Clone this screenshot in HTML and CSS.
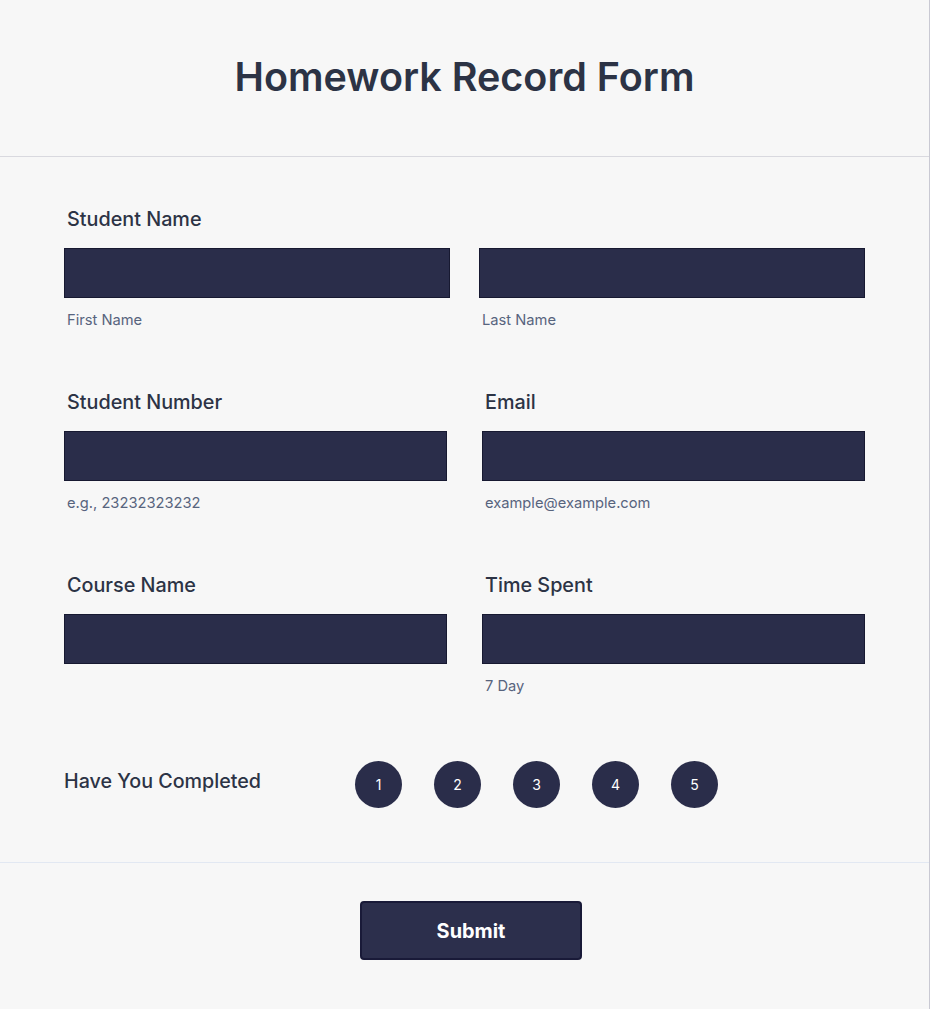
FILE: index.html
```html
<!DOCTYPE html>
<html>
<head>
<meta charset="utf-8">
<link rel="stylesheet" href="styles.css">
</head>
<body>
<div class="card">
  <header class="head">
    <h1 class="title">Homework Record Form</h1>
  </header>
  <form class="form">
    <div class="row row-a">
      <div class="field">
        <div class="label">Student Name</div>
        <div class="input"></div>
        <div class="sub">First Name</div>
      </div>
      <div class="field">
        <div class="label">&nbsp;</div>
        <div class="input"></div>
        <div class="sub">Last Name</div>
      </div>
    </div>
    <div class="row row-b">
      <div class="field">
        <div class="label">Student Number</div>
        <div class="input"></div>
        <div class="sub">e.g., 23232323232</div>
      </div>
      <div class="field">
        <div class="label">Email</div>
        <div class="input"></div>
        <div class="sub">example@example.com</div>
      </div>
    </div>
    <div class="row row-b">
      <div class="field">
        <div class="label">Course Name</div>
        <div class="input"></div>
      </div>
      <div class="field">
        <div class="label">Time Spent</div>
        <div class="input"></div>
        <div class="sub">7 Day</div>
      </div>
    </div>
    <div class="scale-row">
      <div class="scale-label">Have You Completed</div>
      <div class="scale">
        <span class="dot">1</span>
        <span class="dot">2</span>
        <span class="dot">3</span>
        <span class="dot">4</span>
        <span class="dot">5</span>
      </div>
    </div>
  </form>
  <div class="foot">
    <button class="submit" type="button">Submit</button>
  </div>
</div>
</body>
</html>
```
FILE: styles.css
```css
html, body {
  margin: 0;
  padding: 0;
  background: #f7f7f7;
}
body {
  font-family: Inter, "Noto Sans", sans-serif;
  color: #2c3345;
}
.card {
  width: 929px;
  height: 1009px;
  border-right: 1px solid #c9c9d3;
  background: #f7f7f7;
}
.head {
  height: 156px;
  border-bottom: 1px solid #d9d9df;
  display: flex;
  align-items: center;
  justify-content: center;
}
.title {
  margin: 0;
  font-size: 39.5px;
  font-weight: 600;
  color: #2c3345;
  padding-bottom: 2px;
}
.form {
  padding: 51px 64px 0 64px;
  height: 706px;
  box-sizing: border-box;
  border-bottom: 1px solid #e2e8f2;
}
.row {
  display: grid;
  grid-template-columns: 1fr 1fr;
  margin-bottom: 62px;
}
.row-a { column-gap: 29px; }
.row-b { column-gap: 35px; }
.row-b + .row-b { margin-bottom: 66px; }
.label {
  font-size: 19.8px;
  font-weight: 500;
  line-height: 22px;
  padding-left: 3px;
  margin-bottom: 18px;
}
.input {
  height: 48px;
  background: #2a2d4a;
  border: 1px solid #171931;
}
.sub {
  font-size: 14.7px;
  line-height: 18px;
  color: #57647e;
  margin-top: 13px;
  padding-left: 3px;
}
.scale-row {
  display: flex;
  align-items: center;
}
.scale-label {
  width: 291px;
  font-size: 19.7px;
  font-weight: 500;
  line-height: 24px;
  margin-top: -8px;
}
.scale {
  display: flex;
  gap: 32px;
}
.dot {
  width: 47px;
  height: 47px;
  border-radius: 50%;
  background: #2a2d4a;
  color: #ffffff;
  font-size: 14px;
  display: flex;
  align-items: center;
  justify-content: center;
}
.foot {
  display: flex;
  justify-content: center;
  padding-top: 38px;
  padding-left: 13px;
}
.submit {
  width: 222px;
  height: 59px;
  background: #2c2f4c;
  border: 2px solid #191a38;
  border-radius: 4px;
  color: #ffffff;
  font-family: Inter, "Noto Sans", sans-serif;
  font-size: 19.9px;
  font-weight: 700;
  cursor: pointer;
}
```
